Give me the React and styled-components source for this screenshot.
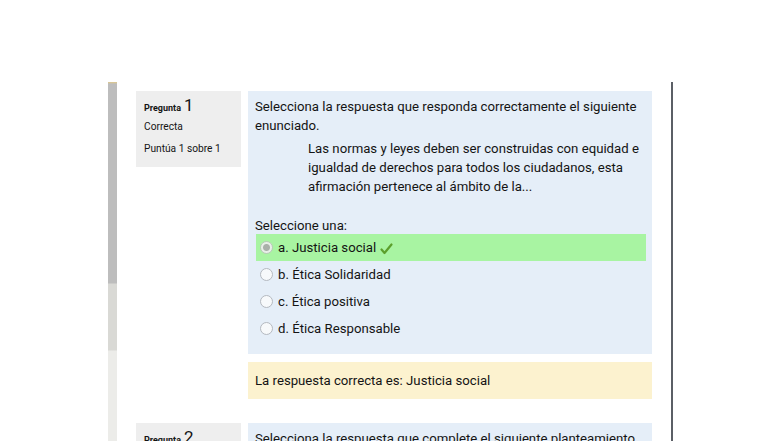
import React from 'react'
import styled, { createGlobalStyle } from 'styled-components'

const GlobalStyle = createGlobalStyle`
	html, body {
		margin: 0;
		padding: 0;
		background: #ffffff;
	}
	body {
		font-family: Roboto, "Liberation Sans", Arial, sans-serif;
		color: #141414;
	}
`

const Page = styled.div`
	width: 784px;
	height: 441px;
	overflow: hidden;
	padding-top: 82px;
	box-sizing: border-box;
`

const Frame = styled.div`
	display: flex;
	margin-left: 108px;
	width: 563px;
	height: 359px;
	border-right: 2px solid #5b5f66;
`

const Scrollbar = styled.div`
	flex: 0 0 9px;
	background: linear-gradient(
		to bottom,
		#e2c98a 0,
		#bdbdbd 2px,
		#bdbdbd 201px,
		#d9d9d5 202px,
		#d9d9d5 268px,
		#ecece9 269px
	);
`

const Main = styled.div`
	flex: 1;
	padding: 9px 18px 0 19px;
	display: flex;
	flex-direction: column;
	gap: 24px;
`

const Question = styled.div`
	display: flex;
	gap: 7px;
	align-items: flex-start;
`

const Info = styled.div`
	flex: 0 0 105px;
	background: #eeeeee;
	padding: 3px 8px 7px;
	box-sizing: border-box;
	font-size: 10.2px;
	color: #141414;
`

const InfoTitle = styled.div`
	height: 22px;
	display: flex;
	align-items: baseline;
	gap: 3px;
	font-size: 9px;
	font-weight: 700;
	line-height: 22px;
`

const QNumber = styled.span`
	font-size: 17px;
	font-weight: 400;
`

const InfoLine = styled.div`
	line-height: 22px;
`

const Content = styled.div`
	flex: 0 0 404px;
	display: flex;
	flex-direction: column;
	gap: 8px;
`

const Formulation = styled.div`
	background: #e5eef8;
	padding: 6px 6px 12px 7px;
	font-size: 13.2px;
	line-height: 19px;
`

const Quote = styled.div`
	margin: 4px 0 0 53px;
`

const Prompt = styled.div`
	margin-top: 22px;
	line-height: 16px;
`

const Answer = styled.div`
	margin-left: 1px;
	display: flex;
	flex-direction: column;
`

const Option = styled.div`
	height: 27px;
	display: flex;
	align-items: center;
	gap: 5px;
	padding-left: 4px;
	background: ${({ correct }) => (correct ? '#a8f4a2' : 'transparent')};
`

const Radio = styled.span`
	width: 11px;
	height: 11px;
	border-radius: 50%;
	border: 1px solid ${({ checked }) => (checked ? '#b9c9b9' : '#b4b9c0')};
	background: ${({ checked }) =>
		checked ? 'radial-gradient(circle, #a9b0a9 0, #a9b0a9 3px, #e8efe8 4px)' : '#f7f9fb'};
	flex: 0 0 auto;
`

const Check = styled.svg`
	margin-left: -1px;
	margin-top: 3px;
`

const Feedback = styled.div`
	background: #fcf2cf;
	height: 37px;
	padding: 0 7px;
	display: flex;
	align-items: center;
	font-size: 13.2px;
`

const options = [
	{ label: 'a. Justicia social', correct: true },
	{ label: 'b. Ética Solidaridad' },
	{ label: 'c. Ética positiva' },
	{ label: 'd. Ética Responsable' },
]

const App = () => (
	<>
		<GlobalStyle />
		<Page>
			<Frame>
				<Scrollbar />
				<Main>
					<Question>
						<Info>
							<InfoTitle>Pregunta <QNumber>1</QNumber></InfoTitle>
							<InfoLine>Correcta</InfoLine>
							<InfoLine>Puntúa 1 sobre 1</InfoLine>
						</Info>
						<Content>
							<Formulation>
								<div>Selecciona la respuesta que responda correctamente el siguiente enunciado.</div>
								<Quote>
									Las normas y leyes deben ser construidas con equidad e igualdad de derechos para todos los ciudadanos, esta afirmación pertenece al ámbito de la...
								</Quote>
								<Prompt>Seleccione una:</Prompt>
								<Answer>
									{options.map(opt => (
										<Option key={opt.label} correct={opt.correct}>
											<Radio checked={opt.correct} />
											{opt.label}
											{opt.correct && (
												<Check width="13" height="12" viewBox="0 0 13 12">
													<path d="M1.5 6.5 L4.5 10 L11.5 1.5" fill="none" stroke="#5c9f2c" strokeWidth="2.2" strokeLinecap="round" strokeLinejoin="round" />
												</Check>
											)}
										</Option>
									))}
								</Answer>
							</Formulation>
							<Feedback>La respuesta correcta es: Justicia social</Feedback>
						</Content>
					</Question>
					<Question>
						<Info>
							<InfoTitle>Pregunta <QNumber>2</QNumber></InfoTitle>
						</Info>
						<Content>
							<Formulation>
								<div>Selecciona la respuesta que complete el siguiente planteamiento.</div>
							</Formulation>
						</Content>
					</Question>
				</Main>
			</Frame>
		</Page>
	</>
)

export default App
